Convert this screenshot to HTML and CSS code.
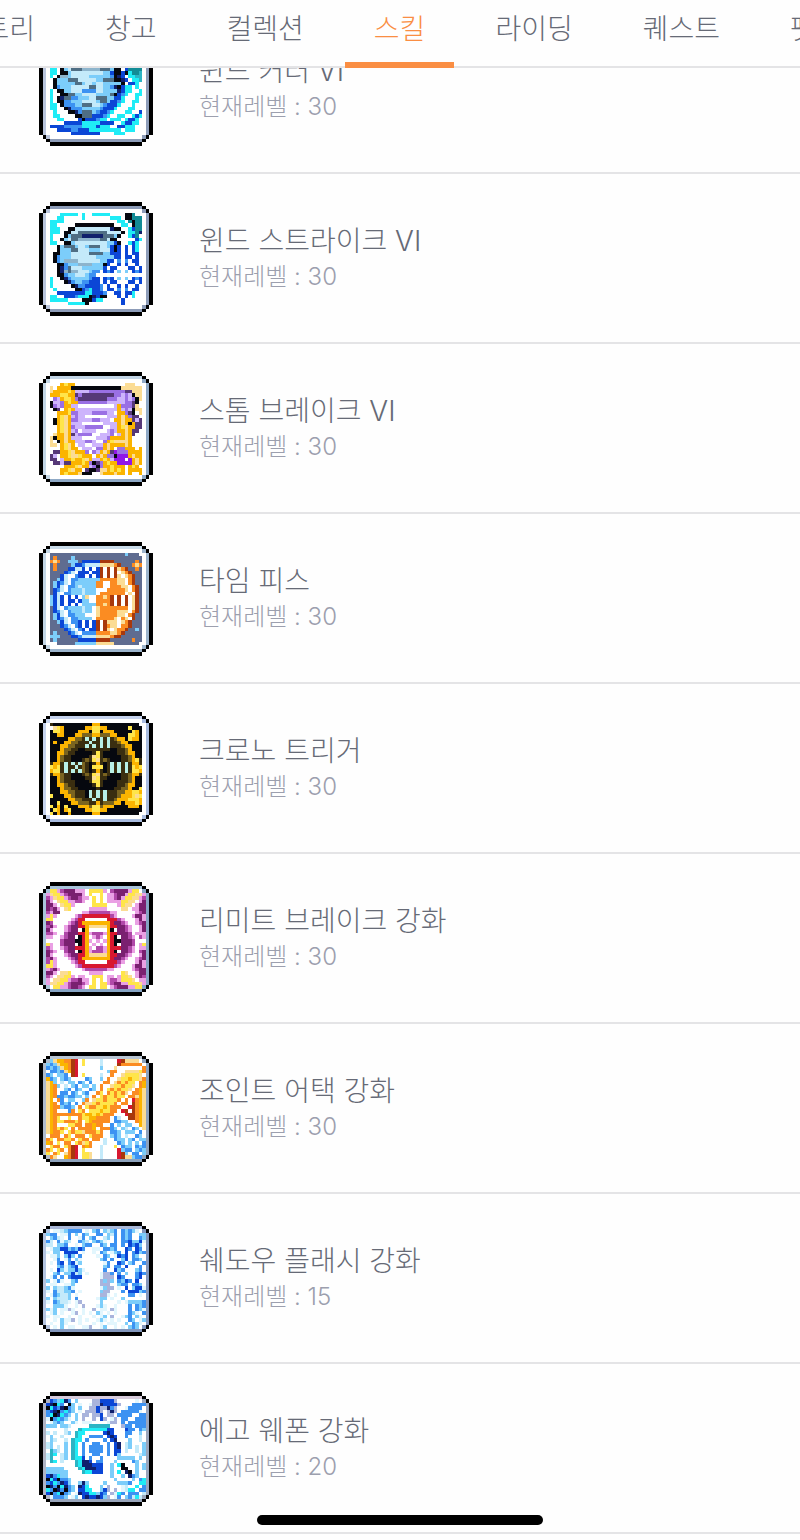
FILE: index.html
```html
<!DOCTYPE html>
<html lang="ko">

<head>
  <meta charset="UTF-8" />
  <meta name="viewport" content="width=device-width, initial-scale=1" />
  <title>스킬</title>
  <link rel="stylesheet" href="styles.css">
</head>

<body>
  <nav class="tabs" id="tabs">
    <a href="#">인벤토리</a>
    <a href="#">창고</a>
    <a href="#">컬렉션</a>
    <a href="#" class="active" aria-current="page">스킬</a>
    <a href="#">라이딩</a>
    <a href="#">퀘스트</a>
    <a href="#">펫</a>
  </nav>

  <ul class="skills">
    <li>
      <svg class="icon" data-icon="cutter" viewBox="0 0 32 32"></svg>
      <div class="info">
        <h2>윈드 커터 VI</h2>
        <p>현재레벨 : 30</p>
      </div>
    </li>
    <li>
      <svg class="icon" data-icon="strike" viewBox="0 0 32 32"></svg>
      <div class="info">
        <h2>윈드 스트라이크 VI</h2>
        <p>현재레벨 : 30</p>
      </div>
    </li>
    <li>
      <svg class="icon" data-icon="storm" viewBox="0 0 32 32"></svg>
      <div class="info">
        <h2>스톰 브레이크 VI</h2>
        <p>현재레벨 : 30</p>
      </div>
    </li>
    <li>
      <svg class="icon" data-icon="time" viewBox="0 0 32 32"></svg>
      <div class="info">
        <h2>타임 피스</h2>
        <p>현재레벨 : 30</p>
      </div>
    </li>
    <li>
      <svg class="icon" data-icon="chrono" viewBox="0 0 32 32"></svg>
      <div class="info">
        <h2>크로노 트리거</h2>
        <p>현재레벨 : 30</p>
      </div>
    </li>
    <li>
      <svg class="icon" data-icon="limit" viewBox="0 0 32 32"></svg>
      <div class="info">
        <h2>리미트 브레이크 강화</h2>
        <p>현재레벨 : 30</p>
      </div>
    </li>
    <li>
      <svg class="icon" data-icon="joint" viewBox="0 0 32 32"></svg>
      <div class="info">
        <h2>조인트 어택 강화</h2>
        <p>현재레벨 : 30</p>
      </div>
    </li>
    <li>
      <svg class="icon" data-icon="shadow" viewBox="0 0 32 32"></svg>
      <div class="info">
        <h2>쉐도우 플래시 강화</h2>
        <p>현재레벨 : 15</p>
      </div>
    </li>
    <li>
      <svg class="icon" data-icon="ego" viewBox="0 0 32 32"></svg>
      <div class="info">
        <h2>에고 웨폰 강화</h2>
        <p>현재레벨 : 20</p>
      </div>
    </li>
  </ul>

  <div class="home-bar"></div>
  <script src="icons.js"></script>
</body>

</html>
```

FILE: styles.css
```css
* {
  box-sizing: border-box;
}

body {
  margin: 0;
  background: #fefefe;
  color: #666a76;
  font-family: Inter, "Noto Sans CJK KR", sans-serif;
  font-weight: 300;
}

.tabs {
  position: fixed;
  top: 0;
  left: 0;
  right: 0;
  z-index: 1;
  height: 68px;
  display: flex;
  gap: 12px;
  overflow-x: auto;
  scrollbar-width: none;
  background: #fefefe;
  box-shadow: inset 0 -2px #e4e4e6;
}

.tabs a {
  flex: none;
  padding: 9px 29px 0;
  border-bottom: 6px solid transparent;
  color: inherit;
  font-size: 28px;
  line-height: 40px;
  text-decoration: none;
}

.tabs .active {
  color: #fa8e43;
  border-color: #fa8e43;
}

.skills {
  margin: 4px 0 0;
  padding: 0;
  list-style: none;
}

.skills li {
  display: flex;
  gap: 46px;
  padding: 28px 39px 26px;
  border-bottom: 2px solid #e4e4e6;
}

.icon {
  flex: none;
  width: 114px;
  height: 114px;
  shape-rendering: crispEdges;
}

.info {
  padding-top: 19px;
}

.info h2 {
  margin: 0;
  font-size: 28px;
  font-weight: 300;
  line-height: 40px;
}

.info p {
  margin: 0;
  color: #9c9fae;
  font-size: 24px;
  line-height: 32px;
}

.home-bar {
  position: fixed;
  left: 50%;
  bottom: 15px;
  z-index: 1;
  width: 286px;
  height: 10px;
  margin-left: -143px;
  border-radius: 5px;
  background: #000;
}
```

FILE: icons.js
```js
(function () {
  // one letter = one pixel colour, '.' stays white
  var colors = {
    K: '#06080f', N: '#10206c', B: '#0b46d6', b: '#3c92f2', s: '#7ccdfa', l: '#c4eafa',
    w: '#e2f6fd', c: '#20ecf6', t: '#2cb4c4', T: '#128c96', g: '#4f6e84', G: '#8db4cc',
    D: '#5f6c90', d: '#a9b4dc', y: '#ffe54a', Y: '#fbb400', a: '#fbdc94', o: '#fb8c22',
    r: '#a8380c', R: '#d81830', p: '#9a70e4', P: '#cdb4fc', V: '#563878', v: '#9018e8',
    m: '#b048a8', M: '#7a2070', k: '#eaa0e4', e: '#7a6420', E: '#3a2e10', i: '#b8f0e8'
  };

  var icons = {
    cutter: { top: '#8d9cb8', left: '#b8c4dc', right: '#8d9cb8', bottom: '#8d9cb8', rows: [
      '...ccccc.c..ccccc....KKT..',
      '..cc.....c.......ccc.KKTTT',
      'cccc...............cc.TKTT',
      'cc.....KKKKKKKKKKK..cc.KTT',
      'ccc..KKllllllllllNKK..cBTT',
      'ccc.KKllggggggggllllK.ccTN',
      'c...KsgggNNNNNNgggsK..cBT.',
      'cc.KslgggGGGGGgggsKK.BTTTT',
      'cc.KKslllllllllssBKKBKcTTt',
      'c.KGGslllllssssssbKNB.cctt',
      '.KsssggglllllssgggKKNB.cct',
      '.KsssssggsllsllsssssK.BBc.',
      '.KbssslllllggllssbNKBcc.c.',
      'c.KKsslllbbbbllssssNBcc..c',
      'c..KKggssllllssssgKBbc..cc',
      'c.KNggbbsssllgggssBBc...c.',
      'c.KKbbsssllllsggsBBbc..cc.',
      'cc.KbbbssgggllsbBBBc...c..',
      'cc..KNbbbsssssbBBBc...cc..',
      '.c...KKNbgggsbBBbc...cc..B',
      '.cc....KKgggBBBbc..cc..cBc',
      '..cc....BKBBBbcc.ccc.cBBc.',
      '....BBBBBcccccBBBB..cBBcc.',
      'BBBBbbbbbccccBccc..BBccc..',
      '..BBBBbbBBBccccccccc.ccc..',
      '......BBBBBBBB....ccc.....'
    ] },
    strike: { top: '#8d9cb8', left: '#b8c4dc', right: '#8d9cb8', bottom: '#8d9cb8', rows: [
      '...ccccc.c..ccccc....KKT..',
      '..cc.....c.......ccc.KKTTT',
      'cccc...............cc.TKTT',
      'cc.....KKKKKKKKKKK..cc.KTT',
      'ccc..KKllllllllllNKK..cBTT',
      'ccc.KKllggggggggllllK.ccTN',
      'c...KsgggNNNNNNgggsK..cBT.',
      'c..KslggGGGGGGgglKK.....Bc',
      'cc..KKslllllllllssBK..cBc.',
      '..KsgggsllsgggllsBKB.B.Bc.',
      '..KsssgglllssslllBKB.B.Bc.',
      '.KKssslllllggggssBBB.B.BB.',
      '.KbssslllllllsssssBB.BB.B.',
      '.KbsGGGGllllllssBB.b.b.BB.',
      '..KKbsssGGGGsssKB..B.B..B.',
      '..KNbglllssssssB.BB...BB.B',
      '..KNGgGGlllsbb.BbB.s.s.BbB',
      '..KKbsslllsbb.............',
      'c..KNbsssssbBB.BbB.s.s.BbB',
      'c...KNbssbbBBB.B.BB...BB.B',
      'c.....KNbbBBBBb.B..B.B..B.',
      '.c.....KKBbcBBb.BB.b.b.BB.',
      '..BBBBBBBBccBBBb..BB.BBc..',
      'cc..BBBbcccKNBKK...B.B.c..',
      'ccccc....KKKBcc.....B.....',
      '.....cccccK.........B.....'
    ] },
    storm: { top: '#c3d6e6', left: '#c3d6e6', right: '#8fa9c6', bottom: '#8fa9c6', rows: [
      '...YyYY..............aaa..',
      'a.YYYYKKKKKKKKKKKKKKaaaaaa',
      'aYYYYyYPPPPppppppppppVVaaa',
      'YYYyyYYVpVVVVVVVVVppPpPKaa',
      '.pPYyyYpVVVVVVVVpppPPpPpKa',
      'KPPpYyYYppppppppPPPPPppVK.',
      'KpPpYYPP..........PYpppVa.',
      '.KV.YyYPPPPPPPPPPPPYPpPKaa',
      '..YYYyppPPPPppppPP.YYpVK.a',
      '..YyaYPpPP......PPPYaYpVV.',
      '.KYyaYppPPPPppPPP.YYaYYVPV',
      '.KYyaYPPP......PPPPYaYKYVV',
      '..YyaYpPPPppppp..PPYyaYYVV',
      '..YyaYPp.PPPP...PpPYYaYVV.',
      '.aYYaYVPpppp..PPPp.PYaYV..',
      'aKYYaYPPP....PPPpYYYYaY...',
      'a.KYaYYPPPppP..pYyaaaaY...',
      'aa.YyaY.PP..PPPYaYYYYaY...',
      '...YyaYY.PPP.ppYaY.ppYYY.Y',
      '.VVYYyaYYYp.pPYaYVvpppYYYY',
      'VP.YYyaayYYY.YaYppKvvvYaYY',
      'VV.PYYyYYyaYPPYyYPvvv.vYaY',
      '.VVPVVYYYyYpKVpYyYYvvvvYaY',
      '....YYYyaYYPpKpYYyYYY.YyY.',
      '...YYyaYY.VKKVaaYyYyY.YYYY',
      '...YyYYYaKKK..aYYYaYY.Y..Y'
    ] },
    time: { top: '#c9dcea', left: '#c3d6e6', right: '#9cb4cc', bottom: '#9cb4cc', rows: [
      'DDDDDDDDDDDDDDDDDDDDDsDDD.',
      'DoDDDDsDDDDDDDDDDDDDDDDDDD',
      'oaoDDsssDBBBBBrrrrDDDDDDoD',
      'DoDDDDsBBbllllaaaaorDDDoao',
      'DoDDDBBllB.B.Br.r.raorDDoD',
      'DDDDBbl.BBB.BBr.r.r.aorDDD',
      'DDDBl..bBB.B.Br.r.ra.aorDD',
      'DDsBl.bbssssssoooooaa.orDD',
      'DsBbl.bssssssoo..ooaa.orDD',
      'DsBl.bbslssssoo..oooaa.orD',
      'DBbl.bssslsss...oooooa.orD',
      'DBl.bbssslsss.ooooooo.a.rD',
      'sBlB.B.B.sa..ooaor.r.r.arD',
      'sBlB.BB.Bss..oooor.r.r.arD',
      'sBlB.B.B.ssssooaor.r.r.arD',
      'DBl.bsssslss.aoooooooo.arD',
      'DBbl.bssslss.aoooooaaa.orD',
      'DsBl.bbsss...aoooooaa.orDD',
      'DsBbl.bbssss.oooooa.oa.rDD',
      'DDsBl.bbB.B.Br.raaa.aorDDD',
      'DDDBbl.bB.B.Br.roaa.oorDDD',
      'DDDDBbl.bB.BBr.ra.aoorDDsD',
      'DsDDDBbl.bbbbooooaaorDDDDD',
      'sssDDDBBbllllaaaaorrDDDDDD',
      'DsDDDDDDBBBBBrrrrDDDDDDoDD',
      '..DDDDDssssssaaaaaDDDDDDD.'
    ] },
    chrono: { top: '#c6d3ee', left: '#c6d3ee', right: '#a9bce0', bottom: '#a9bce0', rows: [
      'EKKKKKKKKKKKYYKKKKKKKKKKK.',
      '.ayYKKKKKKYYyyYYKKKKKKyKKK',
      'KyyYKKKKYYYKyyKYYYKKKKKyYK',
      'KKYYKKKYYeeeYYeeeYYKKKyyYK',
      'KKKKKYYeeEiEiEiEiEeYYKyYYK',
      'KYKKYYeeEEEiEEiEiEEeYYKKKK',
      'KKKYYeeEEEiEiEiEiEEEeYYKKK',
      'KKKYeeEEKKEEEEEEEKKEEeYKKK',
      'KKYYeEEKKKKKEyEKKKKEEeYYKK',
      'KKYeEEKKKKKEayEKKKKKEEeYKK',
      'KKYeEEKKKEeEyaEeEKKKEEeYyE',
      'EYYEiEiEieEKEYEKEiEiEiEYYE',
      'yYyEiEEiEeEKyyyKEiEiEiEyYy',
      'YyyEiEiEieEKEYEKEiEiEiEyyY',
      'EYYeEEKKKEeEyaEeEKKKEEeYYE',
      'KKYeEEKKKKEEayEEKKKKEEeYKK',
      'KKYeEEEKKKKEyyEKKKKEEEeYKK',
      'KKYYeEEKKKKKEyEKKKKEEeYYKK',
      'KKKYeeEEKKKKKEKKKKEEeeYKKy',
      'KKKYYeeEEEKiEiEiEEEeeYYyyY',
      'yKKKYYeEEEKiEiEiEEEeYYYyay',
      'KKKKKYYeeEEEiEEiEEeYYYyyyY',
      'KKyKKKYYeeeEEYEeeeYYKYYYyY',
      'yKYKyKKKYYYeyyeYYYKKKKYYYK',
      'KyYKYyKKKKYYyyYYKKKKKKKKKK',
      'yKYKKYKKKKKKYYKKKKKKKKKKK.'
    ] },
    limit: { top: '#a9c4da', left: '#a9c4da', right: '#86a4c4', bottom: '#86a4c4', rows: [
      'ayykmMMMkkk.yyyyk.mMMMMkyyaa',
      'kayykmMMMMk.y..y.kkmMMkyyaak',
      'mkayykmMMmkk.y.y.kkmMkyyaakm',
      'Mk.ayykkmmk..y.y.kkkkyyaa.kM',
      'MMk.ayyk.....yyyy...kyaa.kMM',
      'MmMk.ay.....kkkkk....aa.kkMM',
      'mkMM......kkmmmmmmkk.....kmM',
      'kyk.....kmRRRRRRRRmk....kMMk',
      'yy.....kmRR......RRRmk...kMk',
      'Mm....kmMRYYYYYYYYRMMmk..kmM',
      'mMk..kmMMRRYaaaaaYRRMMmk..kM',
      'Mk...kmMM.KY.....YK.MMmk..kM',
      'mmk..mMMMRRYkmmmkYRRMMMm.kkk',
      'kk..kmMM.KRY.kmk.YRK.MMmk.mk',
      '....mMMMKKRYk.k.kYRKKMMMm...',
      'yk..mMMM.KRY.k.k.YRK.MMMm.ky',
      'mk..kmMMRRRYk.mmkYRRRMMmk.kk',
      'Mmk..mMM.KRYkmmmkYRK.MMmk.mM',
      'Mk...kmMMRRYaaaaaYRRMMmk..kM',
      'mMk...kmMRYYYYYYYYRMMmk..kmM',
      'myk....kmRR......RRRmk...kMk',
      'yyk.....kmRRRRRRRRRmk...kMMk',
      'kmMk......kmmmmmmkk.....kmMM',
      'MMk.aay.....kkkk.....ya..kMM',
      'mk.aayyk.kk..yyy.kk.kyya.kMm',
      'k.aayykmmMkk.y.y.kmmkyyya.kk',
      'kaayykmMMMmk.y.yykmMMkkyyyak',
      'aayykkmMMmk.yy.yy.kmMMMkkyya'
    ] },
    joint: { top: '#b9c6d4', left: '#b0bccc', right: '#8da2bc', bottom: '#8da2bc', rows: [
      'lsaYYoorR.y....l....Rraaaa..',
      'sbsaYYorR.y....l....roooooo.',
      'bsbsaYorR......s...a.......o',
      '.bbsbaYrR........soo..aaaayo',
      'bs.ssb.rR.y....l..o..ayyyya.',
      'Ybs.sbs....bs..s.o..ayyYyyao',
      'aYs.l.ss.bs.b...oo.aoyoyy.oY',
      'aYos.l.sb.ss.s.o..ayyoyya.oY',
      'aYo..sb.bs..bs.o.yoyoyya.oYa',
      'aYo.bb.bs.sb..oy.oyoyoa.ooYa',
      'aYobbsbbss.s.o.yoyyoyy.ooaYa',
      'aY.ob.ss..so.ayyoyyyo.o.RoYa',
      'aYo.bsb.b.oaayoyyyyo.oo.roYa',
      'aYoosbbs.o.yooyyYyooo..RroYa',
      'aYo...bo.yo.yyyYyyoo.Rr.roYa',
      'aYooooooooyYYyYyooo...RrroYa',
      'aYoy..y..oyyYYoooo.bl..rroYa',
      'aYoyyoooyo.yYooooo.bbss..oYa',
      'aYo...yyoo.ooYoo..b.s.ss..Ya',
      'aYoyoy.o.ooooY.ooobs.sl.bs.a',
      'aYooy.yoyyaoooyo..bbs.sss.b.',
      '.ooo.oy.ooo.yooo..sbs.l..bs.',
      'oy.ooyyo.yoo.oo.l..bss.sb.ss',
      'Yo.y.oo.yoayo...l...bs.s.s.b',
      '.yoo.yorR.oYo..l...y.bss.bsb',
      'oy.yo.orR.y....l....Rsbb.sbs',
      'y.oy.aorR.yya..l....Rrs.bb.s',
      'Yoa..YorR.yya..l....Rraasbbl'
    ] },
    shadow: { top: '#aab8d8', left: '#b4c4e0', right: '#8296bc', bottom: '#8296bc', rows: [
      's.wwlsbbbb.w.sb.slsb.bsbsw.s',
      'sbb.wwb.s.bs..bb.slb.bsb..ss',
      '.sblw.b..wb.sb..ls.b.bsb..bs',
      'bl.bwsl..bsl.sbsw..b.bbBssBw',
      'll.ssb..w.sbb..bs.bb.b.BbBs.',
      '.wssBBsbsBb..ww.bbsb..Bb.Bb.',
      'w.ss.BBBB.w..w.bs.wsb.B.bBsb',
      '.wws.sBs.b....w.bs.wBbB.bs..',
      '..wb.wb.sw.....sb.b..sB.bbs.',
      '.w.bB.bBws......wb..Bb.sb..b',
      '...sbwsbB.......sb.bb.B...b.',
      '.w.BswssBsw.....b..Bsb...sb.',
      '..sb.ssBls.w...wddb.b.s..bBb',
      '.wb.b.bBBB.....wddd.Bb...bB.',
      's.wbw..sb......dsds.bsBb.B..',
      '.ww..wws.......ddd..sbb.bbs.',
      's.sllsbw.......wsdd.w.B.sBBw',
      'w.bllssb.w.....sdd...b.BBBsb',
      '.wbslls.w......ddw.w...bb.w.',
      's.sllls.b.....wss.w..s......',
      'w.bsllw.wd.....s....w.wssssb',
      '..sssw..w.d...wsw..w...b.bsb',
      'sws.wwdw..w..d.ww.dw...b.bsw',
      '.ws.w..wd.w.w.sw.w.w...bsw.b',
      'w.ww..w..w...w.ws.d..wsb.sw.',
      '..w.swwd.w.w..wsw.w.w..bs.ws',
      '.w..sw...w...w.w.www..s.bsw.',
      'w.w.s.ww..wwd..ws..w.w.sbs.w'
    ] },
    ego: { top: '#d8ccdc', left: '#b0b4c4', right: '#9aa6bc', bottom: '#9aa6bc', rows: [
      'KBbscNb.s....ddBBBBd.....w.b',
      'BNKcb.Ks.w..wddNBBBBd...bbbb',
      'KcBbNKbs.s..ddBddNbd..wbbbb.',
      'bBNKbcbs.w.dddBd.dNd.bbbbbw.',
      'bcKNcbs.s.dd.ddB.dd.bbbb..bb',
      'wKbcbsw.s.d..d.Bd.wd.bb..bbb',
      '.wsbs..sw.www....wdd.b.bbbbb',
      'sss.ssl.....tttttt...dbb.bbb',
      '.....l...tcccccccBB...Bbb.bs',
      'l.l..ls.tcc.....BNB...bb..s.',
      '.s..l...tc..bbbb.BNB..b...l.',
      '.sl..l.tcc.b....b.BN...s..l.',
      'ls...s.tc.b..bb..b.BN.ls...s',
      'ls.l.s.tc.b.bbbb.b.BN.ls.l.s',
      '.tsl.s.tc.b.bbbb.b.BB.l..l.s',
      'ltc.ls.tc.b..bb..b.Bs.....ls',
      'lt..ls.tccB.b..b....sssss.s.',
      '.tc.l...tcNNB.bb...s....bs..',
      '........tcNNNBBB..s.cK...s.s',
      'sssss....tcNNNBB..s..KK..s.s',
      'ssssss....tccBBB..s.c.NK.s..',
      'BNbcss............s..s.Nbs..',
      'KcBKbbs............s....s.bc',
      'bBcbNBs..sNs....s...sssb..cc',
      'KNbKcNbs.NBc...s.d...wl..c.b',
      'cbKNbKbs.BBcc..sBd.d.wlcc.bb',
      'BKbcKbs.wNBBccsBb.dwcb.bbb.l',
      '.wbbbs.ws.BNBBNBsd.wb.sblcl.'
    ] }
  };

  function rect(x, y, w, h, fill) {
    return '<rect x="' + x + '" y="' + y + '" width="' + w + '" height="' + h + '" fill="' + fill + '"/>';
  }

  function frame(icon) {
    return rect(3, 0, 26, 32, '#000') + rect(0, 3, 32, 26, '#000') +
      rect(2, 1, 28, 30, '#000') + rect(1, 2, 30, 28, '#000') +
      rect(3, 1, 26, 1, icon.top) + rect(1, 3, 1, 26, icon.left) +
      rect(30, 3, 1, 26, icon.right) + rect(3, 30, 26, 1, icon.bottom) +
      rect(2, 2, 28, 28, '#fff') +
      rect(2, 2, 1, 1, icon.left) + rect(29, 2, 1, 1, icon.right) +
      rect(2, 29, 1, 1, icon.left) + rect(29, 29, 1, 1, icon.right);
  }

  function draw(icon) {
    var size = icon.rows.length;
    var offset = (32 - size) / 2;
    var out = frame(icon);
    icon.rows.forEach(function (row, y) {
      var x = 0;
      while (x < size) {
        var end = x + 1;
        while (end < size && row[end] === row[x]) {
          end++;
        }
        // the four corners belong to the frame
        var corner = size === 28 && (y === 0 || y === 27) && (x === 0 || end === 28);
        if (colors[row[x]] && !corner) {
          out += rect(x + offset, y + offset, end - x, 1, colors[row[x]]);
        }
        x = end;
      }
    });
    return out;
  }

  document.querySelectorAll('.icon').forEach(function (svg) {
    svg.innerHTML = draw(icons[svg.dataset.icon]);
  });

  // keep the selected tab in the middle
  var tabs = document.getElementById('tabs');
  var active = tabs.querySelector('.active');
  tabs.scrollLeft = active.offsetLeft - (tabs.clientWidth - active.offsetWidth) / 2;
})()
```
